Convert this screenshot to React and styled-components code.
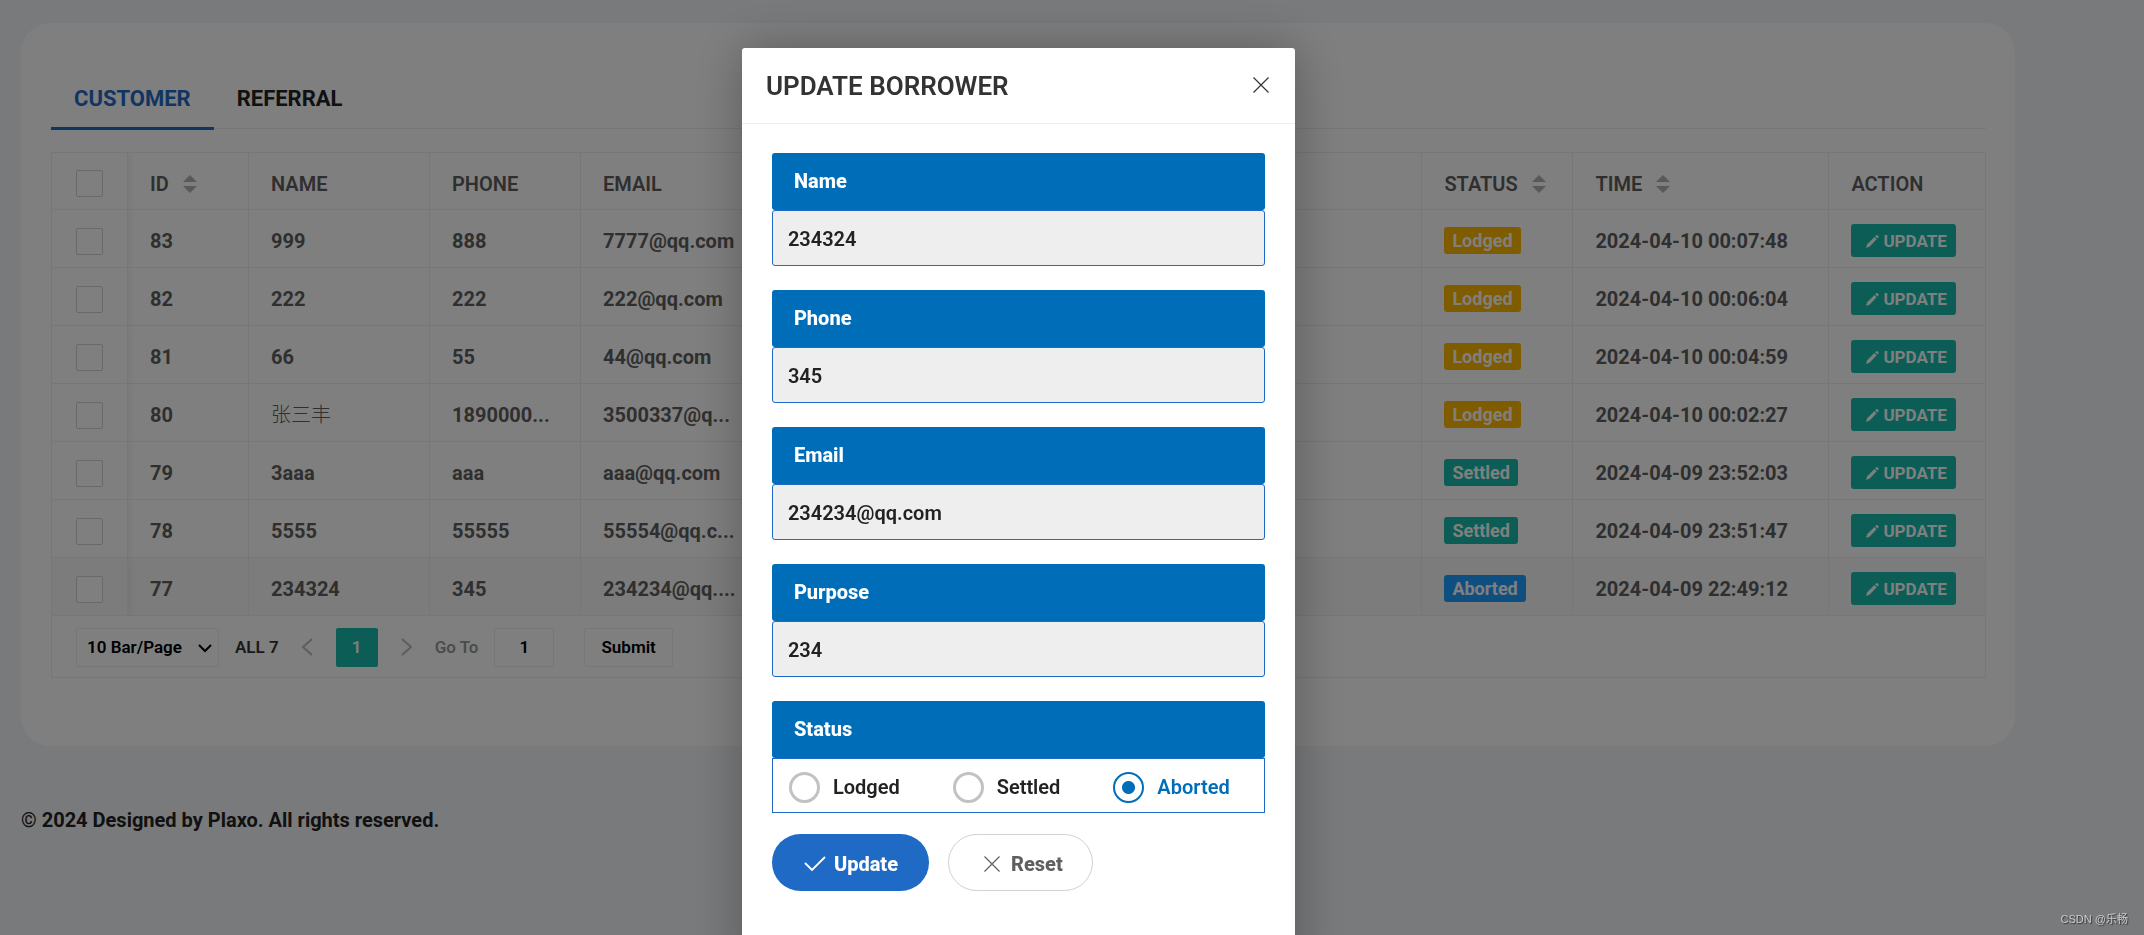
import React, { useState } from "react";
import styled, { createGlobalStyle } from "styled-components";

const borrowers = [
  { id: 83, name: "999", phone: "888", email: "7777@qq.com", status: "Lodged", time: "2024-04-10 00:07:48" },
  { id: 82, name: "222", phone: "222", email: "222@qq.com", status: "Lodged", time: "2024-04-10 00:06:04" },
  { id: 81, name: "66", phone: "55", email: "44@qq.com", status: "Lodged", time: "2024-04-10 00:04:59" },
  { id: 80, name: "张三丰", phone: "1890000...", email: "3500337@q...", status: "Lodged", time: "2024-04-10 00:02:27" },
  { id: 79, name: "3aaa", phone: "aaa", email: "aaa@qq.com", status: "Settled", time: "2024-04-09 23:52:03" },
  { id: 78, name: "5555", phone: "55555", email: "55554@qq.c...", status: "Settled", time: "2024-04-09 23:51:47" },
  { id: 77, name: "234324", phone: "345", email: "234234@qq....", status: "Aborted", time: "2024-04-09 22:49:12" },
];

const statusColors = {
  Lodged: "#ffb800",
  Settled: "#16baaa",
  Aborted: "#1e9fff",
};

const fields = [
  { key: "name", label: "Name", value: "234324" },
  { key: "phone", label: "Phone", value: "345" },
  { key: "email", label: "Email", value: "234234@qq.com" },
  { key: "purpose", label: "Purpose", value: "234" },
];

const isChinese = (text) => /[\u4e00-\u9fff]/.test(text);

const SortIcon = () => (
  <svg width="14" height="18" viewBox="0 0 14 18" fill="#b2b2b2" aria-hidden="true">
    <path d="M7 0 14 7H0z" />
    <path d="M7 18 0 11h14z" />
  </svg>
);

const CrossIcon = () => (
  <svg width="16" height="16" viewBox="0 0 16 16" stroke="currentColor" strokeWidth="1.2" aria-hidden="true">
    <path d="M.5.5l15 15M15.5.5l-15 15" />
  </svg>
);

const CheckIcon = () => (
  <svg width="22" height="16" viewBox="0 0 22 16" fill="none" stroke="currentColor" strokeWidth="1.8" aria-hidden="true">
    <path d="M1 7l7 7L21 1" />
  </svg>
);

const PencilIcon = () => (
  <svg width="13" height="13" viewBox="0 0 13 13" fill="currentColor" aria-hidden="true">
    <path d="M0 13l1.2-3.8L8.4 2l2.2 2.2L3.8 11.6z" />
    <path d="M9.1 1.3l.9-.9q1-.8 2 .2t.3 2l-1 .9z" />
  </svg>
);

const ChevronIcon = ({ right }) => (
  <svg width="11" height="18" viewBox="0 0 11 18" fill="none" stroke="currentColor" strokeWidth="2" aria-hidden="true">
    <path d={right ? "M1 1l9 8-9 8" : "M10 1L1 9l9 8"} />
  </svg>
);

const App = () => {
  const [tab, setTab] = useState("CUSTOMER");
  const [status, setStatus] = useState("Aborted");

  return (
    <>
      <GlobalStyle />
      <Page>
        <Card>
          <Tabs>
            {["CUSTOMER", "REFERRAL"].map((name) => (
              <Tab key={name} $active={tab === name} onClick={() => setTab(name)}>
                {name}
              </Tab>
            ))}
          </Tabs>

          <TableBox>
            <Table>
              <colgroup>
                <col width="76" />
                <col width="121" />
                <col width="181" />
                <col width="151" />
                <col width="181" />
                <col />
                <col width="151" />
                <col width="256" />
                <col width="156" />
              </colgroup>
              <thead>
                <tr>
                  <PinnedHead>
                    <Checkbox aria-label="Select all" />
                  </PinnedHead>
                  <Th><HeadLabel>ID <SortIcon /></HeadLabel></Th>
                  <Th>NAME</Th>
                  <Th>PHONE</Th>
                  <Th>EMAIL</Th>
                  <Th />
                  <Th><HeadLabel>STATUS <SortIcon /></HeadLabel></Th>
                  <Th><HeadLabel>TIME <SortIcon /></HeadLabel></Th>
                  <Th>ACTION</Th>
                </tr>
              </thead>
              <tbody>
                {borrowers.map((row) => (
                  <Row key={row.id} $current={row.id === 77}>
                    <PinnedCell>
                      <Checkbox aria-label={`Select ${row.id}`} />
                    </PinnedCell>
                    <Td>{row.id}</Td>
                    <Td $light={isChinese(row.name)}>{row.name}</Td>
                    <Td>{row.phone}</Td>
                    <Td>{row.email}</Td>
                    <Td />
                    <Td><Badge $color={statusColors[row.status]}>{row.status}</Badge></Td>
                    <Td>{row.time}</Td>
                    <Td>
                      <RowButton><PencilIcon />UPDATE</RowButton>
                    </Td>
                  </Row>
                ))}
              </tbody>
            </Table>

            <Pager>
              <SelectBox>
                <PageSize aria-label="Rows per page" defaultValue="10">
                  <option value="10">10 Bar/Page</option>
                </PageSize>
                <svg width="14" height="9" viewBox="0 0 14 9" fill="none" stroke="#000" strokeWidth="2" aria-hidden="true">
                  <path d="M1 1l6 6 6-6" />
                </svg>
              </SelectBox>
              <Total>ALL 7</Total>
              <Arrow aria-label="Previous page"><ChevronIcon /></Arrow>
              <PageNumber>1</PageNumber>
              <Arrow aria-label="Next page"><ChevronIcon right /></Arrow>
              <GoTo htmlFor="goto">Go To</GoTo>
              <PageInput id="goto" defaultValue="1" />
              <PagerSubmit>Submit</PagerSubmit>
            </Pager>
          </TableBox>
        </Card>
        <Footer>© 2024 Designed by Plaxo. All rights reserved.</Footer>
      </Page>

      <Overlay>
        <Modal role="dialog" aria-labelledby="modal-title">
          <ModalHeader>
            <ModalTitle id="modal-title">UPDATE BORROWER</ModalTitle>
            <CloseButton aria-label="Close"><CrossIcon /></CloseButton>
          </ModalHeader>
          <Form onSubmit={(e) => e.preventDefault()}>
            {fields.map((field) => (
              <Field key={field.key}>
                <FieldLabel htmlFor={field.key}>{field.label}</FieldLabel>
                <FieldInput id={field.key} defaultValue={field.value} readOnly />
              </Field>
            ))}
            <StatusField>
              <FieldLabel as="legend">Status</FieldLabel>
              <RadioRow>
                {Object.keys(statusColors).map((name) => (
                  <RadioLabel key={name} $checked={status === name}>
                    <Radio
                      name="status"
                      checked={status === name}
                      onChange={() => setStatus(name)}
                    />
                    {name}
                  </RadioLabel>
                ))}
              </RadioRow>
            </StatusField>
            <Buttons>
              <PrimaryButton type="submit"><CheckIcon />Update</PrimaryButton>
              <ResetButton type="reset"><CrossIcon />Reset</ResetButton>
            </Buttons>
          </Form>
        </Modal>
      </Overlay>
      <Watermark>CSDN @乐畅</Watermark>
    </>
  );
};

const GlobalStyle = createGlobalStyle`
  * {
    box-sizing: border-box;
  }
  body {
    margin: 0;
    background: #f3f5f8;
    color: #222;
    font: 600 20px/24px Roboto, "Noto Sans CJK SC", sans-serif;
  }
  button, input, select {
    font: inherit;
    color: inherit;
  }
  button {
    cursor: pointer;
  }
`;

const Page = styled.div`
  min-height: 100vh;
  padding: 23px 6% 0 21px;
`;

const Card = styled.main`
  padding: 46px 29px 68px 30px;
  border-radius: 30px;
  background: #fff;
`;

const Tabs = styled.nav`
  display: flex;
  height: 60px;
  border-bottom: 1px solid #eee;
`;

const Tab = styled.button`
  height: 61px;
  padding: 2px 23px 0;
  border: 0;
  border-bottom: 3px solid ${(props) => (props.$active ? "#1f6ac5" : "transparent")};
  background: none;
  color: ${(props) => (props.$active ? "#1f6ac5" : "#222")};
  font-size: 22px;
  font-weight: 700;
`;

const TableBox = styled.div`
  margin-top: 23px;
  border: 1px solid #eee;
  color: #5f5f5f;
`;

const Table = styled.table`
  width: 100%;
  table-layout: fixed;
  border-collapse: separate;
  border-spacing: 0;
`;

const Th = styled.th`
  height: 57px;
  padding: 5px 22px 0;
  border-right: 1px solid #eee;
  border-bottom: 1px solid #eee;
  font-weight: 600;
  text-align: left;
  white-space: nowrap;
  &:last-child {
    border-right: 0;
  }
`;

const HeadLabel = styled.span`
  display: flex;
  align-items: center;
  gap: 14px;
`;

const Td = styled.td`
  height: 58px;
  padding: 4px 22px 0;
  border-right: 1px solid #eee;
  border-bottom: 1px solid #eee;
  font-weight: ${(props) => (props.$light ? 300 : 700)};
  white-space: nowrap;
  &:last-child {
    border-right: 0;
  }
`;

const PinnedHead = styled(Th)`
  padding: 5px 24px 0;
  box-shadow: 1px 0 8px rgba(0, 0, 0, 0.08);
  clip-path: inset(0 -10px 0 0);
`;

const PinnedCell = styled(Td)`
  padding: 5px 24px 0;
  box-shadow: 1px 0 8px rgba(0, 0, 0, 0.08);
  clip-path: inset(0 -10px 0 0);
`;

const Row = styled.tr`
  background: ${(props) => (props.$current ? "#f8f8f8" : "#fff")};
`;

const Checkbox = styled.input.attrs({ type: "checkbox" })`
  appearance: none;
  display: block;
  width: 27px;
  height: 27px;
  margin: 0;
  border: 1px solid #d2d2d2;
  border-radius: 2px;
  background: #fff;
`;

const Badge = styled.span`
  display: inline-block;
  padding: 2px 8px 1px;
  border-radius: 3px;
  background: ${(props) => props.$color};
  color: #fff;
  font-size: 18px;
  vertical-align: middle;
`;

const RowButton = styled.button`
  display: flex;
  align-items: center;
  gap: 4px;
  height: 33px;
  padding: 1px 9px 0 15px;
  border: 0;
  border-radius: 3px;
  background: #16baaa;
  color: #fff;
  font-size: 17px;
`;

const Pager = styled.div`
  display: flex;
  align-items: center;
  height: 61px;
  padding: 1px 24px 0;
  color: #333;
  font-size: 17px;
`;

const SelectBox = styled.div`
  position: relative;
  width: 143px;
  svg {
    position: absolute;
    top: 16px;
    right: 7px;
    pointer-events: none;
  }
`;

const PageSize = styled.select`
  appearance: none;
  display: block;
  width: 100%;
  height: 39px;
  padding: 0 10px;
  border: 1px solid #eee;
  border-radius: 2px;
  background: #fff;
  color: #000;
`;

const Total = styled.span`
  margin-left: 16px;
`;

const Arrow = styled.button`
  display: flex;
  justify-content: center;
  width: 57px;
  padding: 0;
  border: 0;
  background: none;
  color: #bbb;
`;

const PageNumber = styled.button`
  width: 42px;
  height: 39px;
  padding: 0;
  border: 0;
  border-radius: 2px;
  background: #16baaa;
  color: #fff;
`;

const GoTo = styled.label`
  color: #999;
`;

const PageInput = styled.input`
  width: 60px;
  height: 39px;
  margin: 0 30px 0 16px;
  border: 1px solid #eee;
  border-radius: 2px;
  color: #000;
  text-align: center;
`;

const PagerSubmit = styled.button`
  height: 39px;
  padding: 0 16px;
  border: 1px solid #eee;
  border-radius: 2px;
  background: #fff;
  color: #000;
`;

const Footer = styled.footer`
  padding-top: 62px;
  font-weight: 700;
`;

const Overlay = styled.div`
  position: fixed;
  inset: 0;
  display: flex;
  justify-content: center;
  padding: 48px 5% 0 0;
  background: rgba(0, 0, 0, 0.5);
  overflow: hidden;
`;

const Modal = styled.section`
  flex: none;
  width: 553px;
  height: 100vh;
  border-radius: 3px;
  background: #fff;
  box-shadow: 1px 1px 50px rgba(0, 0, 0, 0.3);
`;

const ModalHeader = styled.header`
  display: flex;
  align-items: center;
  justify-content: space-between;
  height: 76px;
  padding: 0 26px 0 24px;
  border-bottom: 1px solid #eee;
`;

const ModalTitle = styled.h2`
  margin: 0;
  color: #333;
  font-size: 26px;
  font-weight: 600;
  line-height: 32px;
`;

const CloseButton = styled.button`
  display: flex;
  padding: 0 0 2px;
  border: 0;
  background: none;
  color: #333;
`;

const Form = styled.form`
  padding: 29px 30px 0;
`;

const Field = styled.div`
  margin: 0 0 24px;
`;

const StatusField = styled.fieldset`
  min-width: 0;
  margin: 0 0 21px;
  padding: 0;
  border: 0;
`;

const FieldLabel = styled.label`
  display: block;
  width: 100%;
  padding: 16px 22px 17px;
  border-radius: 3px;
  background: #006db9;
  color: #fff;
  font-weight: 800;
`;

const FieldInput = styled.input`
  display: block;
  width: 100%;
  height: 56px;
  padding: 2px 15px 0;
  border: 1px solid #1f6ac5;
  border-radius: 3px;
  background: #eee;
  color: #222;
  outline: none;
`;

const RadioRow = styled.div`
  display: flex;
  align-items: center;
  gap: 53px;
  height: 55px;
  padding: 3px 16px 0;
  border: 1px solid #1f6ac5;
`;

const RadioLabel = styled.label`
  display: flex;
  align-items: center;
  gap: 13px;
  color: ${(props) => (props.$checked ? "#006db9" : "#222")};
`;

const Radio = styled.input.attrs({ type: "radio" })`
  appearance: none;
  width: 31px;
  height: 31px;
  margin: 0;
  border: 3px solid #c2c2c2;
  border-radius: 50%;
  &:checked {
    border: 2px solid #006db9;
    background: radial-gradient(#006db9 6px, transparent 7px);
  }
`;

const Buttons = styled.div`
  display: flex;
  gap: 19px;
`;

const PrimaryButton = styled.button`
  display: flex;
  align-items: center;
  gap: 8px;
  height: 57px;
  padding: 2px 31px 0 32px;
  border: 0;
  border-radius: 30px;
  background: #1f6ac5;
  color: #fff;
  font-weight: 800;
`;

const ResetButton = styled(PrimaryButton)`
  gap: 11px;
  padding: 2px 29px 0 35px;
  border: 1px solid #d2d2d2;
  background: #fff;
  color: #5f5f5f;
`;

const Watermark = styled.div`
  position: fixed;
  right: 16px;
  bottom: 8px;
  color: #ccc;
  font: 400 11px/16px "Liberation Sans", "Noto Sans CJK SC", sans-serif;
  text-shadow: 1px 1px 1px #333;
`;

export default App;
